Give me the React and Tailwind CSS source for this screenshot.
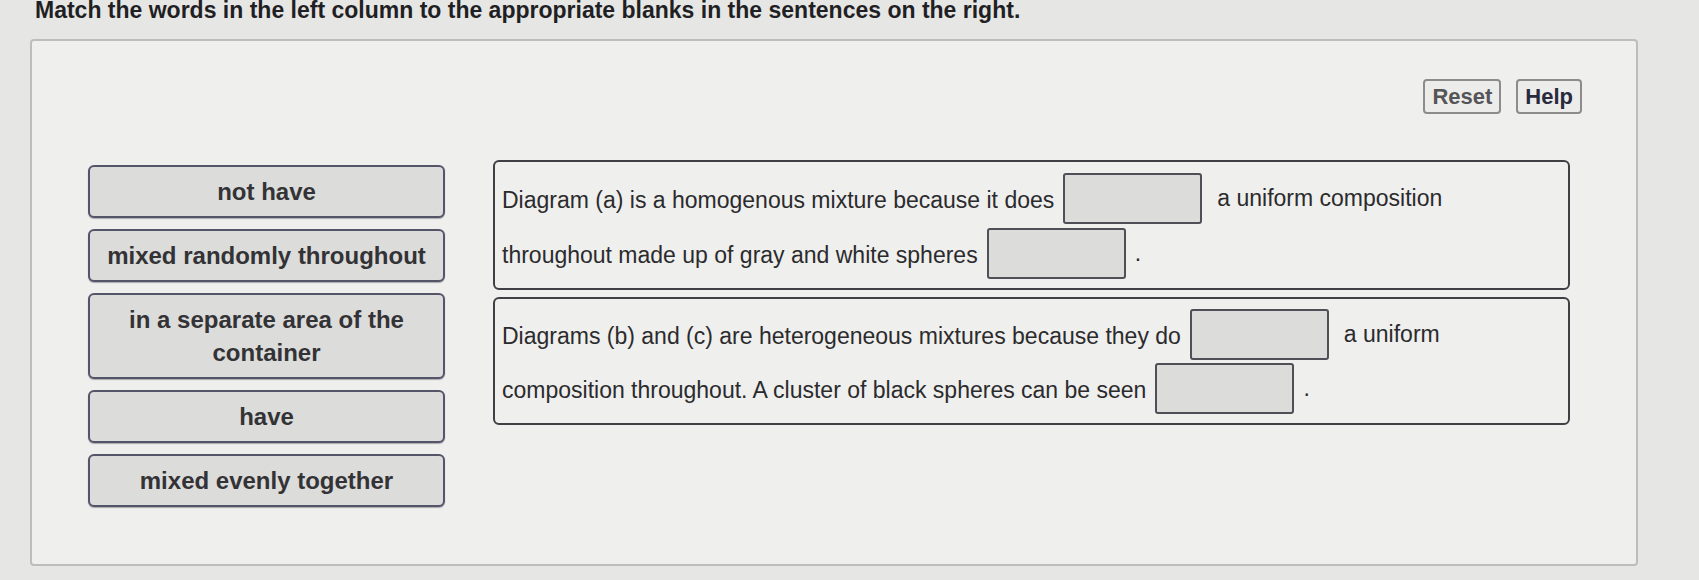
const words = ['not have', 'mixed randomly throughout', 'in a separate area of the container', 'have', 'mixed evenly together'];

function Blank() {
  return <span className="inline-block h-[51px] w-[139px] shrink-0 rounded-[3px] border-2 border-[#4f4f57] bg-[#dcdcda]" />;
}

function Line({ children }) {
  return <div className="flex items-center gap-[9px] whitespace-nowrap">{children}</div>;
}

export default function App() {
  return (
    <div className="min-h-[580px] bg-[#e6e6e4] pl-[30px] pr-[61px] font-['Liberation_Sans',Arial,sans-serif] text-[#2b2b2e]">
      <h1 className="h-[39px] pl-[5px] text-[23px] font-bold leading-[20px] text-[#1f1f24]">
        Match the words in the left column to the appropriate blanks in the sentences on the right.
      </h1>
      <div className="h-[527px] rounded-[4px] border-2 border-[#bdbdbb] bg-[#efefed] pl-[56px] pt-[38px]">
        <div className="flex justify-end gap-[15px] pr-[54px]">
          <button className="h-[35px] rounded-[4px] border-2 border-[#8c8c8c] bg-[#ececea] px-[7px] text-[22px] font-bold leading-none text-[#555558]">
            Reset
          </button>
          <button className="h-[35px] rounded-[4px] border-2 border-[#8c8c8c] bg-[#ececea] px-[7px] text-[22px] font-bold leading-none text-[#2a2a3e]">
            Help
          </button>
        </div>
        <div className="mt-[44px] flex gap-[48px] pr-[66px]">
          <div className="mt-[7px] flex w-[357px] shrink-0 flex-col gap-[11px]">
            {words.map((w) => (
              <div
                key={w}
                className="flex items-center justify-center rounded-[6px] border-2 border-[#55556a] bg-[#dcdcdb] px-[12px] py-[8px] text-center text-[24px] font-bold leading-[33px] text-[#333336] shadow-[0_1px_1px_rgba(40,40,60,0.35)]"
              >
                {w}
              </div>
            ))}
          </div>
          <div className="mt-[2px] flex flex-1 flex-col gap-[7px] text-[23px]">
            <div className="flex flex-col gap-[4px] rounded-[6px] border-2 border-[#3f3f44] bg-[#efefed] pb-[9px] pl-[7px] pt-[11px]">
              <Line>
                <span className="pt-[4px]">Diagram (a) is a homogenous mixture because it does</span>
                <Blank />
                <span className="ml-[6px]">a uniform composition</span>
              </Line>
              <Line>
                <span className="pt-[4px]">throughout made up of gray and white spheres</span>
                <Blank />
                <span>.</span>
              </Line>
            </div>
            <div className="flex flex-col gap-[3px] rounded-[6px] border-2 border-[#3f3f44] bg-[#efefed] pb-[9px] pl-[7px] pt-[10px]">
              <Line>
                <span className="pt-[4px]">Diagrams (b) and (c) are heterogeneous mixtures because they do</span>
                <Blank />
                <span className="ml-[6px]">a uniform</span>
              </Line>
              <Line>
                <span className="pt-[4px]">composition throughout. A cluster of black spheres can be seen</span>
                <Blank />
                <span>.</span>
              </Line>
            </div>
          </div>
        </div>
      </div>
    </div>
  );
}
